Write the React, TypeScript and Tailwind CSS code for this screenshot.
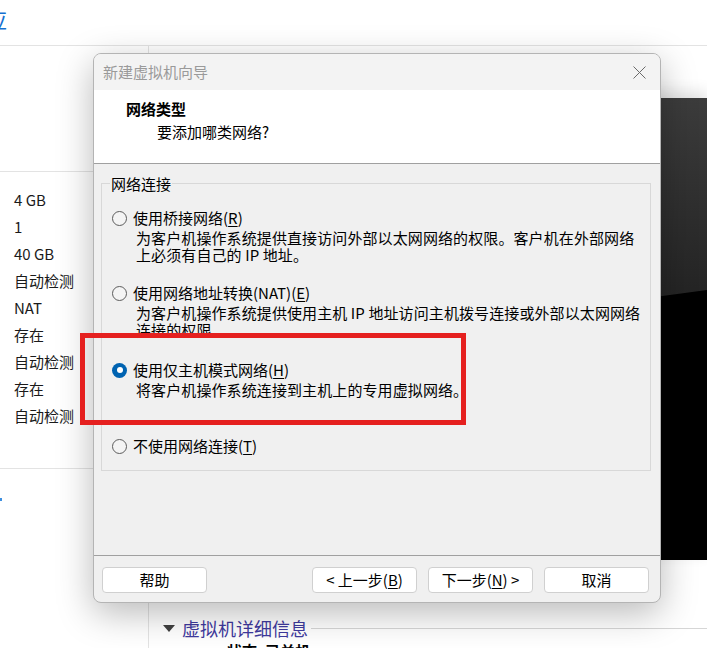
import React from "react";

const F = "font-['Noto_Sans_CJK_SC','Noto_Sans',sans-serif]";

function Radio({ checked }: { checked?: boolean }) {
  if (checked) {
    return (
      <span className="w-[15px] h-[15px] rounded-full bg-[#0063b1] flex items-center justify-center shrink-0">
        <span className="w-[6px] h-[6px] rounded-full bg-white" />
      </span>
    );
  }
  return <span className="w-[15px] h-[15px] rounded-full border border-[#5c5c5c] bg-[#f4f4f4] shrink-0" />;
}

function Option({
  checked,
  label,
  keyChar,
  desc,
  className,
}: {
  checked?: boolean;
  label: string;
  keyChar: string;
  desc?: string[];
  className?: string;
}) {
  return (
    <div className={className}>
      <div className="flex items-center h-[20px] pl-[10px]">
        <Radio checked={checked} />
        <span className="ml-[6px] text-[15px] leading-[20px] text-black whitespace-nowrap">
          {label}(<span className="underline underline-offset-2">{keyChar}</span>)
        </span>
      </div>
      {desc && (
        <div className="mt-[1px] pl-[34px] text-[15px] leading-[17px] tracking-[0.1px] text-black">
          {desc.map((d, i) => (
            <div key={i} className="whitespace-nowrap">
              {d}
            </div>
          ))}
        </div>
      )}
    </div>
  );
}

function Btn({ children, className }: { children: React.ReactNode; className?: string }) {
  return (
    <button
      className={`w-[105px] h-[26px] bg-white border border-[#d0d0d0] rounded-[4px] text-[15px] leading-[20px] text-black flex items-center justify-center ${className ?? ""}`}
    >
      {children}
    </button>
  );
}

export default function App() {
  return (
    <div className={`relative w-[707px] h-[648px] overflow-hidden bg-white ${F}`}>
      {/* background app */}
      <div className="h-[46px] border-b border-[#e3e3e3] flex items-start pt-[5px] overflow-hidden">
        <span className="-ml-[15px] text-[22px] leading-[26px] text-[#1570d0]">应</span>
      </div>
      <div className="flex h-[602px]">
        <div className="w-[149px] border-r border-[#e3e3e3] shrink-0">
          <div className="h-[126px] border-b border-[#e3e3e3]" />
          <div className="pt-[14px] pb-[39px] pl-[14px] border-b border-[#e3e3e3] text-[15px] leading-[27px] text-[#1a1a1a]">
            <div>4 GB</div>
            <div>1</div>
            <div>40 GB</div>
            <div>自动检测</div>
            <div>NAT</div>
            <div>存在</div>
            <div>自动检测</div>
            <div>存在</div>
            <div>自动检测</div>
          </div>
          <div className="mt-[29px] w-[2px] h-[3px] bg-[#3d8fe0]" />
        </div>
        <div className="flex-1 flex flex-col">
          <div className="mt-[52px] ml-[200px] h-[462px] bg-black shadow-[0_-6px_14px_rgba(0,0,0,0.12)]">
            <svg width="358" height="462" viewBox="0 0 358 462" className="block w-full h-full">
              <defs>
                <linearGradient id="g" x1="0" y1="0" x2="0" y2="1">
                  <stop offset="0" stopColor="#3c3c3c" />
                  <stop offset="1" stopColor="#1f1f1f" />
                </linearGradient>
              </defs>
              <path d="M0 0 H358 V192 L0 240 Z" fill="url(#g)" />
            </svg>
          </div>
          <div className="mt-[56px] pl-[14px] flex items-center h-[24px]">
            <svg width="12" height="7" viewBox="0 0 12 7" className="shrink-0">
              <path d="M0 0 H12 L6 7 Z" fill="#404040" />
            </svg>
            <span className="ml-[7px] text-[18px] leading-[24px] text-[#3f3a9e] whitespace-nowrap">虚拟机详细信息</span>
            <div className="flex-1 h-px bg-[#d6d6d6] ml-[3px]" />
          </div>
          <div className="mt-[1px] pl-[78px] text-[15px] leading-[20px] font-bold text-black whitespace-nowrap">
            状态: 已关机
          </div>
        </div>
      </div>

      {/* dialog */}
      <div className="absolute left-[93px] top-[53px] w-[568px] h-[550px] rounded-[8px] border border-[#b4b4b4] bg-[#f0f0f0] overflow-hidden shadow-[0_10px_36px_rgba(0,0,0,0.28)] flex flex-col">
        <div className="h-[36px] bg-[#f3f3f3] flex items-center justify-between pl-[9px] pr-[14px] shrink-0">
          <span className="text-[15px] leading-[20px] text-[#9a9a9a]">新建虚拟机向导</span>
          <svg width="13" height="13" viewBox="0 0 13 13">
            <path d="M0.5 0.5 L12.5 12.5 M12.5 0.5 L0.5 12.5" stroke="#6a6a6a" strokeWidth="1" />
          </svg>
        </div>
        <div className="h-[74px] bg-white border-b border-[#a0a0a0] shrink-0 pt-[9px]">
          <div className="pl-[32px] text-[15px] leading-[20px] font-bold text-black">网络类型</div>
          <div className="mt-[3px] pl-[63px] text-[15px] leading-[20px] text-black">要添加哪类网络?</div>
        </div>
        <div className="flex-1 pt-[19px] pl-[7px] pr-[9px]">
          <div className="relative border border-[#d8d8d8] pt-[24px] pb-[14px]">
            <span className="absolute left-[8px] -top-[10px] px-[1px] bg-[#f0f0f0] text-[15px] leading-[20px] text-black">
              网络连接
            </span>
            <Option
              label="使用桥接网络"
              keyChar="R"
              desc={["为客户机操作系统提供直接访问外部以太网网络的权限。客户机在外部网络", "上必须有自己的 IP 地址。"]}
            />
            <Option
              className="mt-[20px]"
              label="使用网络地址转换(NAT)"
              keyChar="E"
              desc={["为客户机操作系统提供使用主机 IP 地址访问主机拨号连接或外部以太网网络", "连接的权限。"]}
            />
            <Option
              className="mt-[22px]"
              checked
              label="使用仅主机模式网络"
              keyChar="H"
              desc={["将客户机操作系统连接到主机上的专用虚拟网络。"]}
            />
            <Option className="mt-[38px]" label="不使用网络连接" keyChar="T" />
          </div>
        </div>
        <div className="h-[47px] border-t border-[#a0a0a0] shrink-0 flex items-start pt-[11px] pl-[8px] pr-[11px]">
          <Btn>帮助</Btn>
          <div className="flex-1" />
          <Btn>
            &lt; 上一步(<span className="underline underline-offset-2">B</span>)
          </Btn>
          <Btn className="ml-[11px]">
            下一步(<span className="underline underline-offset-2">N</span>) &gt;
          </Btn>
          <Btn className="ml-[11px]">取消</Btn>
        </div>
      </div>

      {/* annotation */}
      <div className="absolute left-[80px] top-[333px] w-[386px] h-[92px] border-[5px] border-[#e5201f]" />
    </div>
  );
}
